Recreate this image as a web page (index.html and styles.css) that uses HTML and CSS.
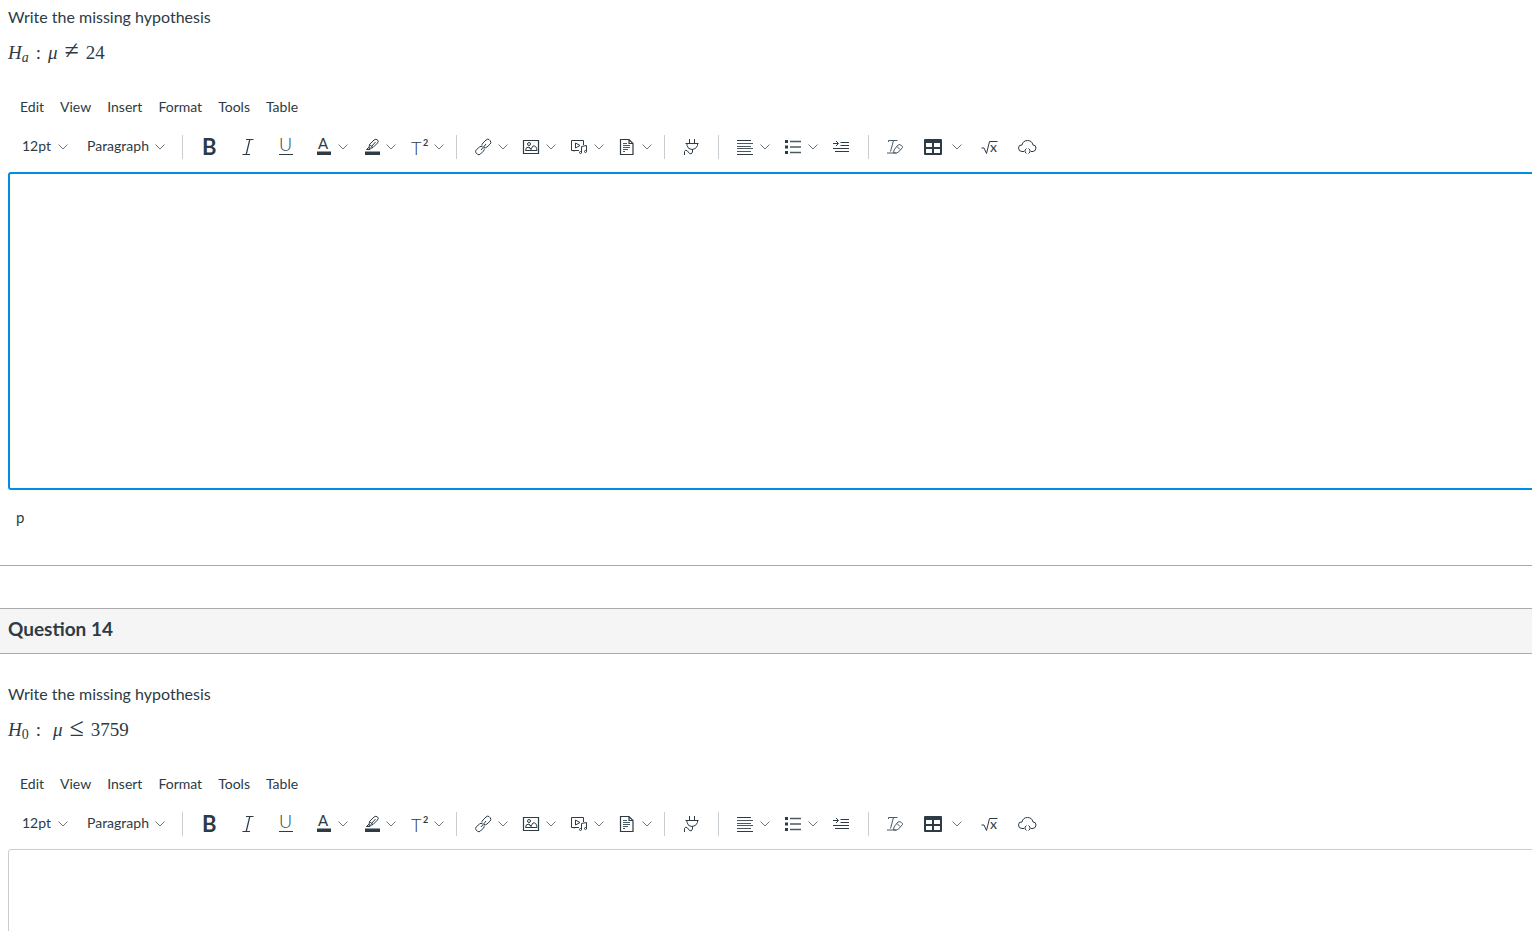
FILE: index.html
```html
<!DOCTYPE html>
<html lang="en">
<head>
    <meta charset="utf-8">
    <meta name="viewport" content="width=device-width, initial-scale=1.0">
    <title>Quiz</title>
    <link rel="stylesheet" href="styles.css">
</head>
<body>
<svg class="sprite" aria-hidden="true">
    <symbol id="chevron" viewBox="0 0 10 6"><path d="M.5 .5 5 5 9.500 .5" stroke="#6b7780"/></symbol>
    <symbol id="bold" viewBox="0 0 20 20"><text class="glyph-bold" x="3" y="18">B</text></symbol>
    <symbol id="italic" viewBox="0 0 20 20"><path d="M9 2.500h7.500M5.500 17.500H13M12.800 2.500 9.200 17.500" stroke-width="1.200"/></symbol>
    <symbol id="underline" viewBox="0 0 20 20"><text class="glyph-large" x="4" y="14">U</text><path d="M4 17.500h14"/></symbol>
    <symbol id="color" viewBox="0 0 20 20"><text class="glyph" x="5" y="12">A</text><path class="solid" d="M4 14.500h14V18H4z"/></symbol>
    <symbol id="highlight" viewBox="0 0 20 20">
        <path d="M8.500 7.500 13 3q2-1.500 3.500 0t0 3L12 10.500 8 11.500zM8.500 7.500l3.500 3M14.500 5l-4 4.500M8 10 5.500 12.500h3.500l1-1"/>
        <path class="solid" d="M4 14.500h15V18H4z"/>
    </symbol>
    <symbol id="super" viewBox="0 0 20 20"><text class="glyph-large" x="2" y="18">T</text><text class="glyph-small" x="14" y="9">2</text></symbol>
    <symbol id="link" viewBox="0 0 20 20">
        <path d="M9 8.500Q8.500 7.500 10 6L13 3q1.500-1.500 3-.5l1.200 1.200q1.300 1.800 0 3.300L14 10q-1.500 1.300-3 .5M11 11.500q.8 1-.5 2.500L7.500 17q-1.500 1.500-3 .3L3 15.800q-1-1.500.3-3L6.500 10q1.500-1.300 3-.3M8 13 13 7"/>
    </symbol>
    <symbol id="image" viewBox="0 0 20 20">
        <path stroke-width="1.200" d="M2.500 3.500h15v13h-15z"/><circle cx="8" cy="7" r="1.500"/>
        <path d="M4.500 13.500q0-3.500 3.500-3.500l2 2 2-3q3.500-1 4 4.500zM8 10.500l2.500 2.500"/>
    </symbol>
    <symbol id="media" viewBox="0 0 20 20">
        <path d="M10 13.500H2.500v-10h12V8M5 13.500v1M6.500 6v5l4.500-2.500zM12.500 15.500V9.500L17.500 8.500v6"/>
        <circle cx="11.500" cy="15.500" r="1"/><circle cx="16.500" cy="14.500" r="1"/>
    </symbol>
    <symbol id="document" viewBox="0 0 20 20">
        <path stroke-width="1.200" d="M3.500 2.500h8.500l4 4v11h-12.500zM12 2.500v4h4"/>
        <path d="M6 6.500h4M6 8.500h7M6 10.500h7M6 12.500h5M6 14.500h2" stroke="#4b5963"/>
    </symbol>
    <symbol id="plug" viewBox="0 0 20 20">
        <path d="M8.500 2v4.500M13.500 2v4.500M4.500 6.500h13M6 6.500v2q1 4 5 4t5.500-4v-2M11.500 12.500v2.500q-1 3-3 1.500L6.500 14q-2-2-3 .5V18"/>
    </symbol>
    <symbol id="align" viewBox="0 0 20 20">
        <path d="M2 3.500h14M2 17.500h16"/>
        <path d="M2 6.500h16M2 9.500h14M2 11.500h16M2 14.500h14" stroke="#4b5963"/>
    </symbol>
    <symbol id="list" viewBox="0 0 20 20">
        <path d="M7 4.500h11M7 10h11M7 15.500h11" stroke="#4b5963" stroke-width="1.300"/>
        <path class="solid" d="M2 3h3v3H2zM2 8.500h3v3H2zM2 14h3v3H2z"/>
    </symbol>
    <symbol id="indent" viewBox="0 0 20 20"><path d="M2 6.500h5M5 4 7.500 6.500 5 9M9.500 5.500H18M9.500 8.500H18M2 11.500h16M4 14.500h14"/></symbol>
    <symbol id="clear" viewBox="0 0 20 20">
        <path d="M3.500 5V3.500h9M8.500 3.500 5.500 14.500M2 16h9.500M9 13 13 8q2-1 3.500.5t1 2L13.500 15l-2 1H8.500zM12 9.500l3 3" stroke="#4b5963"/>
    </symbol>
    <symbol id="table" viewBox="0 0 20 20">
        <path class="solid" fill-rule="evenodd" d="M2 2h16q1 0 1 1v14q0 1-1 1H2q-1 0-1-1V3q0-1 1-1zM3 6v4h6V6zM11 6v4h6V6zM3 12v4h6v-4zM11 12v4h6v-4z"/>
    </symbol>
    <symbol id="equation" viewBox="0 0 20 20"><path d="M2.500 11H5L7.500 16.500 10.500 4.500H18.500"/><text class="glyph-medium" x="11" y="15">x</text></symbol>
    <symbol id="cloud" viewBox="0 0 20 20">
        <path d="M7 14.500H5q-3.500 0-3.500-3.500T5 8q1-4.500 5.500-4.500T16 8q3 0 3 3t-3 3.500h-2M9.500 11.500 8 13v2l1.500 1.500M11.500 11.500 13 13v2l-1.500 1.500"/>
    </symbol>
</svg>

<main class="quiz">
    <section class="question">
        <div class="question-text">
            <p>Write the missing hypothesis</p>
            <p class="math"><span><i>H</i><sub><i>a</i></sub></span><span>:</span><i>μ</i><span class="rel">≠</span><span>24</span></p>
        </div>
        <div class="editor">
            <div class="menubar">
                <button type="button">Edit</button>
                <button type="button">View</button>
                <button type="button">Insert</button>
                <button type="button">Format</button>
                <button type="button">Tools</button>
                <button type="button">Table</button>
            </div>
            <div class="toolbar">
                <label class="picker"><select aria-label="Font size"><option>12pt</option></select><svg class="chevron"><use href="#chevron"/></svg></label>
                <label class="picker"><select aria-label="Block"><option>Paragraph</option></select><svg class="chevron"><use href="#chevron"/></svg></label>
                <div class="group">
                    <button type="button" aria-label="Bold"><svg><use href="#bold"/></svg></button>
                    <button type="button" aria-label="Italic"><svg><use href="#italic"/></svg></button>
                    <button type="button" aria-label="Underline"><svg><use href="#underline"/></svg></button>
                    <button type="button" aria-label="Text color"><svg><use href="#color"/></svg><svg class="chevron"><use href="#chevron"/></svg></button>
                    <button type="button" aria-label="Highlight"><svg><use href="#highlight"/></svg><svg class="chevron"><use href="#chevron"/></svg></button>
                    <button type="button" aria-label="Superscript"><svg><use href="#super"/></svg><svg class="chevron"><use href="#chevron"/></svg></button>
                </div>
                <div class="group">
                    <button type="button" aria-label="Link"><svg><use href="#link"/></svg><svg class="chevron"><use href="#chevron"/></svg></button>
                    <button type="button" aria-label="Image"><svg><use href="#image"/></svg><svg class="chevron"><use href="#chevron"/></svg></button>
                    <button type="button" aria-label="Media"><svg><use href="#media"/></svg><svg class="chevron"><use href="#chevron"/></svg></button>
                    <button type="button" aria-label="Document"><svg><use href="#document"/></svg><svg class="chevron"><use href="#chevron"/></svg></button>
                </div>
                <div class="group">
                    <button type="button" aria-label="Apps"><svg><use href="#plug"/></svg></button>
                </div>
                <div class="group">
                    <button type="button" aria-label="Align"><svg><use href="#align"/></svg><svg class="chevron"><use href="#chevron"/></svg></button>
                    <button type="button" aria-label="List"><svg><use href="#list"/></svg><svg class="chevron"><use href="#chevron"/></svg></button>
                    <button type="button" aria-label="Indent"><svg><use href="#indent"/></svg></button>
                </div>
                <div class="group">
                    <button type="button" aria-label="Clear formatting"><svg><use href="#clear"/></svg></button>
                    <button type="button" class="wide" aria-label="Table"><svg><use href="#table"/></svg><svg class="chevron"><use href="#chevron"/></svg></button>
                    <button type="button" aria-label="Equation"><svg><use href="#equation"/></svg></button>
                    <button type="button" aria-label="Embed"><svg><use href="#cloud"/></svg></button>
                </div>
            </div>
            <textarea class="active" aria-label="Answer 13"></textarea>
            <div class="statusbar"><button type="button">p</button></div>
        </div>
    </section>

    <section class="question">
        <h2 class="question-header">Question 14</h2>
        <div class="question-text">
            <p>Write the missing hypothesis</p>
            <p class="math"><span><i>H</i><sub>0</sub></span><span class="colon">:</span><i>μ</i><span class="rel">≤</span><span>3759</span></p>
        </div>
        <div class="editor">
            <div class="menubar">
                <button type="button">Edit</button>
                <button type="button">View</button>
                <button type="button">Insert</button>
                <button type="button">Format</button>
                <button type="button">Tools</button>
                <button type="button">Table</button>
            </div>
            <div class="toolbar">
                <label class="picker"><select aria-label="Font size"><option>12pt</option></select><svg class="chevron"><use href="#chevron"/></svg></label>
                <label class="picker"><select aria-label="Block"><option>Paragraph</option></select><svg class="chevron"><use href="#chevron"/></svg></label>
                <div class="group">
                    <button type="button" aria-label="Bold"><svg><use href="#bold"/></svg></button>
                    <button type="button" aria-label="Italic"><svg><use href="#italic"/></svg></button>
                    <button type="button" aria-label="Underline"><svg><use href="#underline"/></svg></button>
                    <button type="button" aria-label="Text color"><svg><use href="#color"/></svg><svg class="chevron"><use href="#chevron"/></svg></button>
                    <button type="button" aria-label="Highlight"><svg><use href="#highlight"/></svg><svg class="chevron"><use href="#chevron"/></svg></button>
                    <button type="button" aria-label="Superscript"><svg><use href="#super"/></svg><svg class="chevron"><use href="#chevron"/></svg></button>
                </div>
                <div class="group">
                    <button type="button" aria-label="Link"><svg><use href="#link"/></svg><svg class="chevron"><use href="#chevron"/></svg></button>
                    <button type="button" aria-label="Image"><svg><use href="#image"/></svg><svg class="chevron"><use href="#chevron"/></svg></button>
                    <button type="button" aria-label="Media"><svg><use href="#media"/></svg><svg class="chevron"><use href="#chevron"/></svg></button>
                    <button type="button" aria-label="Document"><svg><use href="#document"/></svg><svg class="chevron"><use href="#chevron"/></svg></button>
                </div>
                <div class="group">
                    <button type="button" aria-label="Apps"><svg><use href="#plug"/></svg></button>
                </div>
                <div class="group">
                    <button type="button" aria-label="Align"><svg><use href="#align"/></svg><svg class="chevron"><use href="#chevron"/></svg></button>
                    <button type="button" aria-label="List"><svg><use href="#list"/></svg><svg class="chevron"><use href="#chevron"/></svg></button>
                    <button type="button" aria-label="Indent"><svg><use href="#indent"/></svg></button>
                </div>
                <div class="group">
                    <button type="button" aria-label="Clear formatting"><svg><use href="#clear"/></svg></button>
                    <button type="button" class="wide" aria-label="Table"><svg><use href="#table"/></svg><svg class="chevron"><use href="#chevron"/></svg></button>
                    <button type="button" aria-label="Equation"><svg><use href="#equation"/></svg></button>
                    <button type="button" aria-label="Embed"><svg><use href="#cloud"/></svg></button>
                </div>
            </div>
            <textarea aria-label="Answer 14"></textarea>
        </div>
    </section>
</main>
</body>
</html>
```
FILE: styles.css
```css
* {
    box-sizing: border-box;
}
body {
    margin: 0;
    background: white;
    color: #2d3b45;
    font: 16px/24px Lato, sans-serif;
    overflow: hidden;
}
button, select {
    font: inherit;
    color: inherit;
    background: none;
    border: 0;
    margin: 0;
    padding: 0;
}
.sprite {
    display: none;
}
.quiz {
    padding-top: 5px;
}
.question {
    border-bottom: 1px solid #aaa;
    margin-bottom: 42px;
    padding-bottom: 21px;
}
.question-header {
    margin: 0 0 28px;
    padding: 8px 8px 12px;
    font-size: 19px;
    font-weight: 700;
    line-height: 24px;
    background: #f5f5f5;
    border: solid #aaa;
    border-width: 1px 0;
}
.question-text {
    padding: 0 8px;
    margin-bottom: 27px;
}
.question-text p {
    margin: 0 0 12px;
}
.question-text .math {
    display: flex;
    align-items: baseline;
    gap: 7px;
    height: 24px;
    margin: 0;
    font-family: "Liberation Serif", serif;
    font-size: 19px;
}
.math sub {
    font-size: 14px;
    line-height: 0;
    vertical-align: -3px;
}
.math .rel {
    font-size: 26px;
    line-height: 0;
}
.math .colon {
    margin-right: 5px;
}
.editor {
    margin: 0 -8px 0 8px;
}
.menubar {
    display: flex;
    padding-left: 4px;
    font-size: 14px;
}
.menubar button {
    height: 30px;
    padding: 0 8px;
}
.toolbar {
    display: flex;
    align-items: center;
    height: 50px;
    padding-left: 14px;
    font-size: 14px;
}
.picker {
    display: flex;
    align-items: center;
    gap: 6px;
    margin-right: 19px;
    padding-bottom: 3px;
}
.picker + .group {
    margin-left: -2px;
}
.picker select {
    appearance: none;
}
.picker .chevron {
    margin-top: 3px;
}
.group {
    display: flex;
    align-items: center;
    height: 24px;
    padding: 0 8px 0 7px;
    border-left: 1px solid #c7cdd1;
}
.group button {
    display: flex;
    align-items: center;
    gap: 5px;
    padding: 0 9px;
}
.group button:has(.chevron) {
    padding-right: 4px;
}
.group .wide:has(.chevron) {
    gap: 9px;
    padding-right: 8px;
}
.toolbar svg {
    width: 20px;
    height: 20px;
    fill: none;
    stroke: #2d3b45;
}
.toolbar .chevron {
    width: 10px;
    height: 6px;
}
.solid, .glyph, .glyph-bold, .glyph-large, .glyph-medium, .glyph-small {
    fill: #2d3b45;
    stroke: none;
}
.glyph {
    font: 15px Lato, sans-serif;
}
.glyph-bold {
    font: 700 22px Lato, sans-serif;
}
.glyph-large {
    font: 300 18px Lato, sans-serif;
}
.glyph-medium {
    font: 14px Lato, sans-serif;
}
.glyph-small {
    font: 700 9px Lato, sans-serif;
}
textarea {
    display: block;
    width: 100%;
    height: 318px;
    padding: 8px;
    border: 1px solid #c7cdd1;
    border-radius: 3px;
    outline: 0;
    resize: none;
}
textarea.active {
    border: 2px solid #008ee2;
}
.statusbar {
    display: flex;
    align-items: center;
    height: 54px;
    padding-left: 8px;
    font-size: 15px;
}
```
